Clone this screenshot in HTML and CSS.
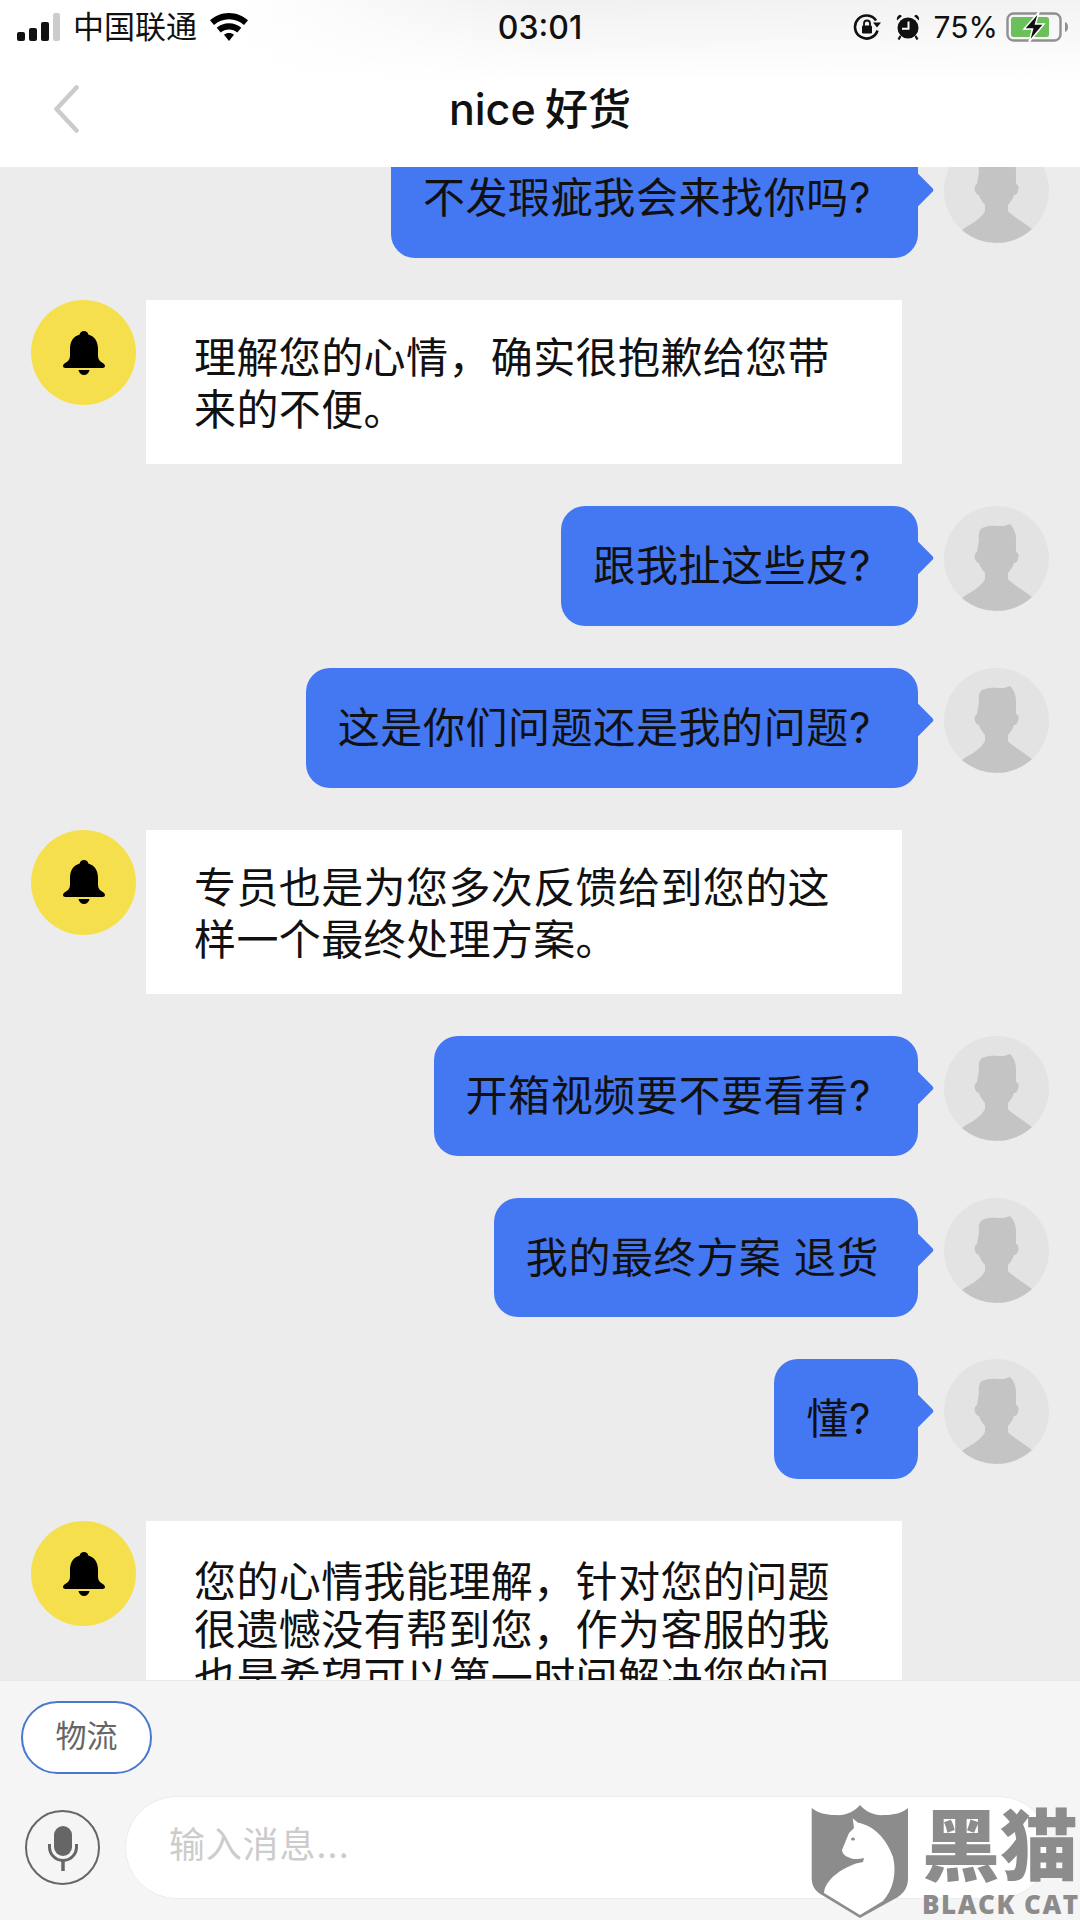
FILE: index.html
```html
<!DOCTYPE html>
<html lang="zh-CN">
<head>
    <meta charset="UTF-8">
    <title>nice 好货</title>
    <link rel="stylesheet" href="styles.css">
</head>
<body>
    <svg class="defs" width="0" height="0">
        <symbol id="bell" viewBox="0 0 42 44">
            <path d="M21 0c2.300 0 4 1.600 4.300 3.400C32 5.300 35 10.800 35 18v7c0 3.400 2 5.300 4.800 7 1.500.9 2.200 1.900 2.200 3 0 1.300-1 2-2.500 2H2.500C1 37 0 36.300 0 35c0-1.100.7-2.100 2.200-3C5 30.300 7 28.400 7 25v-7C7 10.800 10 5.300 16.700 3.400 17 1.600 18.700 0 21 0z"/>
            <path d="M15.500 39h11c-.5 2.900-2.700 5-5.500 5s-5-2.100-5.500-5z"/>
        </symbol>
        <symbol id="user" viewBox="0 0 105 105">
            <circle cx="52.500" cy="52.500" r="52.500" fill="#e3e3e3"/>
            <path fill="#c4c4c4" d="M35 34C34 26 36 22 41 21 46 19 52 20 60 20L66 18C70 22 72 27 72 34V46C75 47 75 50 74 53 73 56 72 57 70 57 69 60 67 64 64 67V73C66 76 72 79 88 91A52.500 52.500 0 0 1 18 92C24 87 36 83 41 73V67C38 64 36 60 35 57 33 57 32 55 31 53 30 50 31 47 33 46z"/>
        </symbol>
    </svg>

    <div class="page">
        <header class="top">
            <div class="status">
                <div class="status-left">
                    <div class="signal"><i></i><i></i><i></i><i></i></div>
                    <span class="carrier">中国联通</span>
                    <svg class="wifi" viewBox="0 0 38 28" width="38" height="28">
                        <path d="M19 0c7.300 0 13.800 2.800 19 7.300l-4 4.700C29.800 8.400 24.700 6.300 19 6.300S8.200 8.400 4 12L0 7.300C5.200 2.800 11.700 0 19 0z"/>
                        <path d="M19 10.300c4.700 0 8.900 1.700 12.300 4.500l-4 4.600c-2.300-1.800-5.200-3-8.300-3s-6 1.200-8.300 3l-4-4.600c3.400-2.800 7.600-4.500 12.300-4.500z"/>
                        <path d="M19 20c1.900 0 3.600.6 5 1.700L19 28l-5-6.300c1.400-1.100 3.100-1.700 5-1.700z"/>
                    </svg>
                </div>
                <span class="time">03:01</span>
                <div class="status-right">
                    <svg class="lock" viewBox="0 0 28 28" width="28" height="28">
                        <path d="M24.500 17.500A11.500 11.500 0 1 1 23 7.500" fill="none" stroke="#111" stroke-width="2.600"/>
                        <path d="M20 9.500h8l-4 5z" fill="#111"/>
                        <rect x="9" y="12.500" width="10" height="8" rx="1.200" fill="#111"/>
                        <path d="M11 13V10.500a3 3 0 0 1 6 0V13" fill="none" stroke="#111" stroke-width="1.800"/>
                    </svg>
                    <svg class="alarm" viewBox="0 0 24 26" width="24" height="26">
                        <circle cx="12" cy="14" r="10.500" fill="#111"/>
                        <path d="M1 6.500 6 2 4 .8C2 1.200.4 3.500 1 6.500zM23 6.500 18 2l2-1.200c2 .4 3.600 2.700 3 5.700z" fill="#111"/>
                        <path d="M4.500 22 2.500 25.500M19.500 22l2 3.500" stroke="#111" stroke-width="2.200"/>
                        <path d="M12.500 7.500v7.300H6" fill="none" stroke="#fff" stroke-width="2"/>
                    </svg>
                    <span class="percent">75%</span>
                    <svg class="battery" viewBox="0 0 64 30" width="64" height="30">
                        <rect x="1.500" y="1.500" width="53" height="27" rx="6" fill="none" stroke="#8f8f8f" stroke-width="2.400"/>
                        <rect x="5" y="5" width="38" height="20" rx="2.500" fill="#6cc05c"/>
                        <path d="M59 10c2 .6 3 2.400 3 5s-1 4.400-3 5z" fill="#8f8f8f"/>
                        <path d="M33 0 18 17h8.500L23 30 38 12h-8.500z" fill="#111" stroke="#fff" stroke-width="1.500"/>
                    </svg>
                </div>
            </div>
            <nav class="nav">
                <svg class="back" viewBox="0 0 26 48" width="26" height="48">
                    <path d="M23.500 2.500 3.500 24l20 21.500" fill="none" stroke="#cbcbcb" stroke-width="4.500" stroke-linecap="round" stroke-linejoin="round"/>
                </svg>
                <h1 class="title">nice 好货</h1>
            </nav>
        </header>

        <main class="chat">
            <div class="msgs">
                <div class="row me">
                    <div class="bubble">不发瑕疵我会来找你吗?</div>
                    <svg class="avatar"><use href="#user"/></svg>
                </div>
                <div class="row bot">
                    <div class="bot-icon"><svg width="42" height="44"><use href="#bell"/></svg></div>
                    <div class="card">理解您的心情，确实很抱歉给您带<br>来的不便。</div>
                </div>
                <div class="row me">
                    <div class="bubble">跟我扯这些皮?</div>
                    <svg class="avatar"><use href="#user"/></svg>
                </div>
                <div class="row me">
                    <div class="bubble">这是你们问题还是我的问题?</div>
                    <svg class="avatar"><use href="#user"/></svg>
                </div>
                <div class="row bot">
                    <div class="bot-icon"><svg width="42" height="44"><use href="#bell"/></svg></div>
                    <div class="card">专员也是为您多次反馈给到您的这<br>样一个最终处理方案。</div>
                </div>
                <div class="row me">
                    <div class="bubble">开箱视频要不要看看?</div>
                    <svg class="avatar"><use href="#user"/></svg>
                </div>
                <div class="row me">
                    <div class="bubble plain">我的最终方案 退货</div>
                    <svg class="avatar"><use href="#user"/></svg>
                </div>
                <div class="row me">
                    <div class="bubble">懂?</div>
                    <svg class="avatar"><use href="#user"/></svg>
                </div>
                <div class="row bot">
                    <div class="bot-icon"><svg width="42" height="44"><use href="#bell"/></svg></div>
                    <div class="card tight">您的心情我能理解，针对您的问题<br>很遗憾没有帮到您，作为客服的我<br>也是希望可以第一时间解决您的问<br>题。</div>
                </div>
            </div>
        </main>

        <footer class="bottom">
            <div class="chips">
                <span class="chip">物流</span>
            </div>
            <div class="composer">
                <div class="mic">
                    <svg viewBox="0 0 30 46" width="30" height="46">
                        <rect x="6" y="1" width="18" height="30" rx="9" fill="#666"/>
                        <path d="M1.500 19v3a13.500 13.500 0 0 0 27 0v-3" fill="none" stroke="#666" stroke-width="3"/>
                        <path d="M15 35v11" stroke="#666" stroke-width="3.500"/>
                    </svg>
                </div>
                <div class="input">输入消息...</div>
            </div>
        </footer>

        <div class="mark">
            <svg class="shield" viewBox="0 0 97 113" width="97" height="113">
                <path fill="#8c8c8c" d="M49 0C55 7 64 11 74 10 83 10 91 8 97 3V73C97 81 94 87 87 92L49 113 11 90C4 86 .7 81 .7 73V3C7 8 15 10 24 10 34 11 43 7 49 0z"/>
                <path fill="#fff" d="M41.700 13.300 47 17.700C62 20 76 34 82 52 86 68 82 85 72 96L49 110 13 88C14 74 34 60 52 57L53 53C46 55 40 54 37 52 33 51 31 47 31 45 33 40 36 33 38 28L43 23z"/>
                <ellipse cx="42" cy="34" rx="2" ry="1.500" fill="#8c8c8c"/>
            </svg>
            <div class="mark-text">
                <span class="mark-cn">黑猫</span>
                <span class="mark-en">BLACK CAT</span>
            </div>
        </div>
    </div>
</body>
</html>
```

FILE: styles.css
```css
* {
    box-sizing: border-box;
}
html, body {
    margin: 0;
    padding: 0;
}
body {
    width: 1080px;
    height: 1920px;
    overflow: hidden;
    font-family: Inter, "Noto Sans CJK SC", sans-serif;
    color: #111;
}
.defs {
    position: absolute;
}
.page {
    position: relative;
    display: flex;
    flex-direction: column;
    height: 1920px;
    background-color: #ececec;
}

/* header */
.top {
    height: 167px;
    flex: none;
    position: relative;
    z-index: 2;
    background: linear-gradient(to bottom, rgba(255, 255, 255, 0), #fff 80px),
        linear-gradient(to right, #fff 22%, #f1f1f1 50%, #f3f3f3);
}
.status {
    height: 54px;
    display: flex;
    align-items: center;
    justify-content: space-between;
    position: relative;
    padding: 0 10px 0 17px;
}
.status-left, .status-right {
    display: flex;
    align-items: center;
}
.signal {
    display: flex;
    align-items: flex-end;
    gap: 4px;
    height: 28px;
    margin-right: 13px;
}
.signal i {
    display: block;
    width: 8px;
    border-radius: 2px;
    background-color: #111;
}
.signal i:nth-child(1) { height: 9px; }
.signal i:nth-child(2) { height: 13px; }
.signal i:nth-child(3) { height: 19px; }
.signal i:nth-child(4) { height: 28px; background-color: #ccc; width: 7px; }
.carrier {
    font-size: 31px;
    line-height: 40px;
}
.wifi {
    margin-left: 13px;
}
.time {
    position: absolute;
    left: 0;
    right: 0;
    text-align: center;
    font-size: 32px;
    font-weight: 500;
}
.lock {
    margin-right: 15px;
}
.alarm {
    margin-right: 14px;
}
.percent {
    font-size: 30px;
    margin-right: 8px;
}
.nav {
    height: 113px;
    position: relative;
    display: flex;
    align-items: center;
    justify-content: center;
}
.back {
    position: absolute;
    left: 53px;
    top: 31px;
}
.title {
    margin: 0 0 4px;
    font-size: 43px;
    font-weight: 500;
    line-height: 50px;
    word-spacing: -2px;
}

/* messages */
.chat {
    flex: 1;
    min-height: 0;
    overflow: hidden;
}
.msgs {
    display: flex;
    flex-direction: column;
    gap: 42px;
    margin-top: -28.600px;
}
.row {
    display: flex;
    align-items: flex-start;
}
.me {
    justify-content: flex-end;
    gap: 26px;
    padding-right: 31px;
}
.bot {
    gap: 10px;
    padding-left: 31px;
}
.avatar {
    width: 105px;
    height: 105px;
    flex: none;
}
.bubble {
    position: relative;
    height: 119.800px;
    padding: 0 47px 0 32px;
    border-radius: 24px;
    background-color: #4477f2;
    font-size: 42px;
    letter-spacing: .6px;
    line-height: 119px;
    white-space: nowrap;
}
.bubble.plain {
    padding-right: 39px;
}
.bubble::after {
    content: "";
    position: absolute;
    right: -11px;
    top: 39px;
    width: 26px;
    height: 26px;
    border-radius: 3px;
    background-color: #4477f2;
    transform: rotate(45deg);
}
.bot-icon {
    width: 105px;
    height: 105px;
    flex: none;
    display: flex;
    align-items: center;
    justify-content: center;
    border-radius: 50%;
    background-color: #f6df4c;
}
.card {
    width: 756px;
    padding: 32px 20px 28px 48px;
    background-color: #fff;
    font-size: 42px;
    letter-spacing: .4px;
    line-height: 52px;
    white-space: nowrap;
}
.tight {
    padding-top: 37px;
    line-height: 48px;
}

/* bottom bar */
.bottom {
    height: 240px;
    flex: none;
    position: relative;
    z-index: 2;
    background-color: #f5f5f5;
    border-top: 1px solid #e8e8e8;
}
.chips {
    padding: 20px 0 0 21px;
    display: flex;
}
.chip {
    width: 131px;
    height: 73px;
    border: 2px solid #4a78d0;
    border-radius: 37px;
    background-color: #fff;
    color: #666;
    font-size: 31px;
    line-height: 66px;
    text-align: center;
}
.composer {
    display: flex;
    align-items: center;
    margin-top: 22px;
    padding-left: 25px;
    gap: 25px;
}
.mic {
    width: 75px;
    height: 75px;
    border: 2.500px solid #666;
    border-radius: 50%;
    display: flex;
    align-items: center;
    justify-content: center;
}
.input {
    width: 925px;
    height: 103px;
    padding-left: 43px;
    border: 1px solid #ececec;
    border-radius: 52px;
    background-color: #fff;
    color: #ccc;
    font-size: 36px;
    letter-spacing: .8px;
    line-height: 96px;
}

/* watermark */
.mark {
    position: absolute;
    z-index: 3;
    left: 811px;
    top: 1805px;
    display: flex;
    gap: 14px;
}
.mark-text {
    display: flex;
    flex-direction: column;
    align-items: flex-start;
}
.mark-cn {
    font-size: 78px;
    font-weight: 900;
    line-height: 84px;
    color: #8c8c8c;
    white-space: nowrap;
}
.mark-en {
    font-family: "Open Sans", sans-serif;
    font-size: 26px;
    font-weight: 800;
    line-height: 24px;
    letter-spacing: 1.500px;
    margin-top: 3px;
    color: #8c8c8c;
    white-space: nowrap;
}
```
